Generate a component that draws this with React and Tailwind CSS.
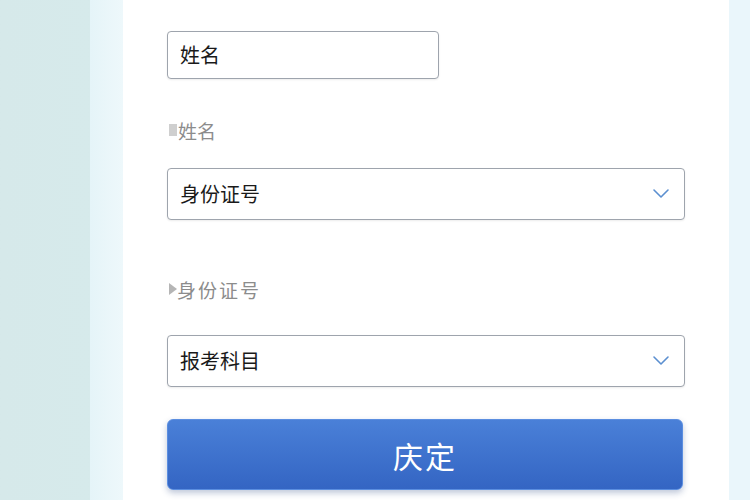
import React from "react";

const font = { fontFamily: '"Noto Sans CJK SC", "Noto Sans", sans-serif' };

function Chevron() {
  return (
    <svg width="18" height="12" viewBox="0 0 18 12" className="shrink-0">
      <path d="M2 2 L9 9 L16 2" fill="none" stroke="#5b8fd0" strokeWidth="1.6" strokeLinecap="round" strokeLinejoin="round" />
    </svg>
  );
}

function Select({ text }) {
  return (
    <div className="flex h-[52px] w-[518px] items-center justify-between rounded-[4px] border-[1.5px] border-[#9ea4ad] bg-white pl-[12px] pr-[14px] shadow-[0_1px_2px_rgba(0,0,0,0.08)]">
      <span className="text-[20px] leading-none text-[#1a1a1a]">{text}</span>
      <Chevron />
    </div>
  );
}

export default function App() {
  return (
    <div className="flex h-[500px] w-[750px] overflow-hidden" style={font}>
      <div className="h-full w-[90px] bg-gradient-to-r from-[#d6e9ea] to-[#d6eaeb]" />
      <div className="h-full w-[33px] bg-gradient-to-r from-[#e5f4f8] to-[#eef8fb]" />
      <div className="flex h-full flex-1 flex-col bg-white pl-[44px]">
        <div className="mt-[31px] flex h-[48px] w-[272px] items-center rounded-[4px] border-[1.5px] border-[#9ea4ad] bg-white pl-[12px] shadow-[0_1px_2px_rgba(0,0,0,0.08)]">
          <span className="text-[20px] leading-none text-[#1a1a1a]">姓名</span>
        </div>
        <div className="mt-[39px] flex h-[24px] items-center pl-[2px]">
          <span className="mr-[1px] h-[12px] w-[8px] bg-[#cfcfcf]" />
          <span className="text-[19px] leading-none text-[#8c8c8c]">姓名</span>
        </div>
        <div className="mt-[26px]">
          <Select text="身份证号" />
        </div>
        <div className="mt-[57px] flex h-[24px] items-center pl-[2px]">
          <span className="h-0 w-0 border-y-[6px] border-l-[8px] border-y-transparent border-l-[#b5b5b5]" />
          <span className="text-[19px] leading-none tracking-[2px] text-[#8c8c8c]">身份证号</span>
        </div>
        <div className="mt-[34px]">
          <Select text="报考科目" />
        </div>
        <button className="mt-[32px] flex h-[71px] w-[516px] items-center justify-center rounded-[6px] border border-[#5b8ee0] bg-gradient-to-b from-[#4a80d8] to-[#3465c3] shadow-[0_3px_6px_rgba(40,70,130,0.3)]">
          <span className="text-[30px] leading-none tracking-[2px] text-white">庆定</span>
        </button>
      </div>
      <div className="h-full w-[21px] bg-[#eaf6fb]" />
    </div>
  );
}
